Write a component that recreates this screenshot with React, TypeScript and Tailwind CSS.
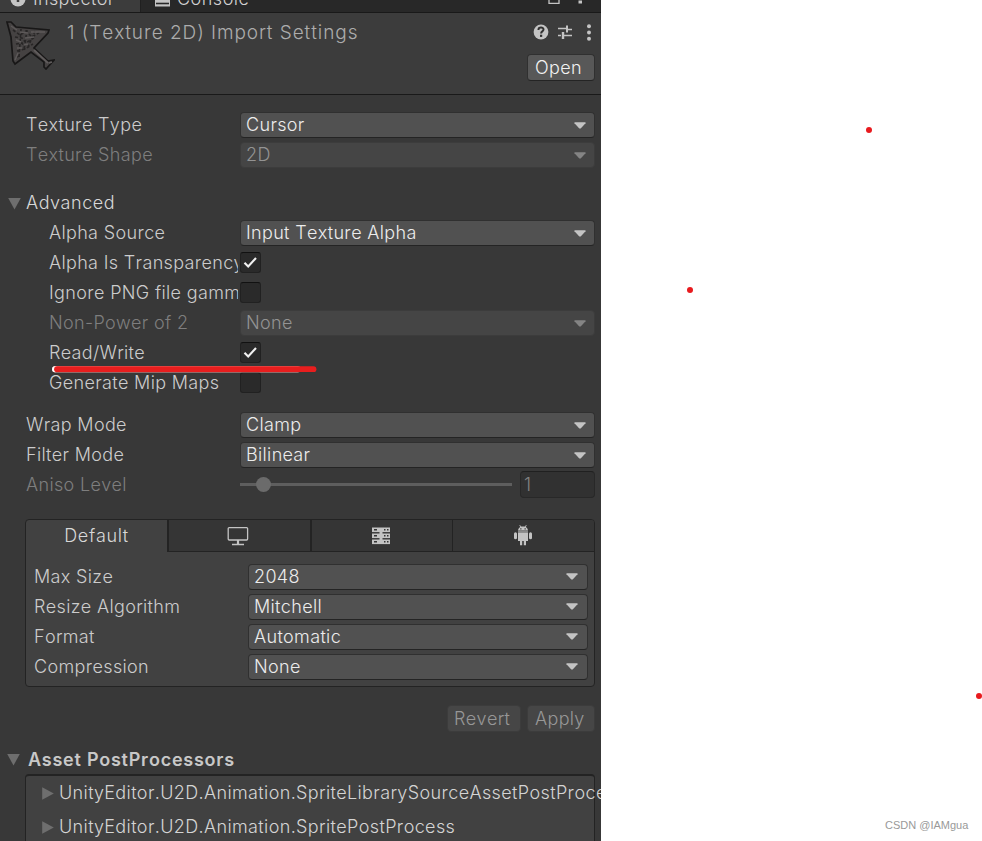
import type { ReactNode } from 'react';
import { clsx } from 'clsx';

interface RowProps {
  label: string;
  disabled?: boolean;
  indent?: boolean;
  children: ReactNode;
}

function Row({ label, disabled, indent, children }: RowProps) {
  return (
    <div className="flex h-[30px] items-center">
      <div className={clsx('w-[238px] shrink-0 overflow-hidden whitespace-nowrap', indent ? 'pl-[49px]' : 'pl-[26px]', disabled ? 'text-[#7e7e7e]' : 'text-[#cccccc]')}>
        {label}
      </div>
      <div className="ml-[2px] flex w-[355px] items-center">{children}</div>
    </div>
  );
}

function Dropdown({ value, disabled }: { value: string; disabled?: boolean }) {
  return (
    <div
      className={clsx(
        'flex h-[26px] w-full items-center justify-between rounded-[4px] border pr-[8px] pl-[5px]',
        disabled ? 'border-[#3c3c3c] bg-[#454545] text-[#939393]' : 'border-[#303030] border-b-[#242424] bg-[#515151] text-[#ececec]'
      )}
    >
      <span>{value}</span>
      <svg width="12" height="7" viewBox="0 0 12 7" className={disabled ? 'text-[#848484]' : 'text-[#c4c4c4]'}>
        <path d="M0.5 0.3h11v1L6.7 6.5H5.3L0.5 1.3z" fill="currentColor" />
      </svg>
    </div>
  );
}

function Checkbox({ checked }: { checked?: boolean }) {
  return (
    <div className="mb-[1px] flex h-[21px] w-[21px] items-center justify-center rounded-[3px] border border-[#212121] border-t-[#111111] bg-[#2a2a2a]">
      {checked && (
        <svg width="15" height="13" viewBox="0 0 15 13" fill="none">
          <path d="M1.5 6.7l3.7 3.8L13 2" stroke="#f0f0f0" strokeWidth="2.1" />
        </svg>
      )}
    </div>
  );
}

function PanelRow({ label, value }: { label: string; value: string }) {
  return (
    <div className="flex h-[30px] items-center">
      <div className="w-[214px] text-[#cccccc]">{label}</div>
      <div className="w-[340px] [&_svg]:mr-[1px] [&_svg]:mb-[2px]">
        <Dropdown value={value} />
      </div>
    </div>
  );
}

function Foldout({ open }: { open?: boolean }) {
  return (
    <svg width="13" height="13" viewBox="0 0 13 13" fill="#6e6e6e" className="shrink-0">
      {open ? <path d="M0.2 1h12.6L6.5 12.5z" /> : <path d="M0.2 0.2v12.6L11.8 6.5z" />}
    </svg>
  );
}

function CursorThumb() {
  return (
    <svg width="50" height="50" viewBox="0 0 50 50" className="-ml-[1px] shrink-0">
      <path d="M2 2h4l5 5 33 3-1 3-14 15 14 13 6-1-8 9-2-2v-5L26 32 10 44l-2-3-2-24z" fill="#454242" stroke="#181717" strokeWidth="1.7" />
      <path d="M8 10l7 5 6-4 6 6 8-5M10 17l7 1 4 5 9-6M11 24l6-1 3 6 8-5M12 31l8-2M12 37l4-2M16 9l-2 28M22 10l-3 20M30 11l-7 16" fill="none" stroke="#282626" strokeWidth="1.6" strokeDasharray="3 2" />
      <path d="M6 6l6 4M15 12l8 1M26 12l14 0M11 20l5 2M20 18l9-1M12 28l5 0M10 40l3-7M19 25l4-1" stroke="#5d5959" strokeWidth="1.5" />
      <path d="M29 30l14 13M44 43l3-1" stroke="#605c5c" strokeWidth="1.8" />
    </svg>
  );
}

function HelpIcon() {
  return (
    <svg width="16" height="16" viewBox="0 0 16 16">
      <circle cx="8" cy="8" r="7.4" fill="#c4c4c4" />
      <path d="M5.5 6V5.4C5.5 2.7 10.6 2.8 10.5 5.6 10.5 7.5 8.1 7.3 8.1 9.4" fill="none" stroke="#303030" strokeWidth="2" />
      <rect x="7" y="10.7" width="2.2" height="2.2" fill="#303030" />
    </svg>
  );
}

function PresetIcon() {
  return (
    <svg width="16" height="16" viewBox="0 0 16 16" fill="none" stroke="#c4c4c4">
      <path d="M1 4.5h9M10 5.5h5M1 11.5h3M7 11.5h8" strokeWidth="1.3" />
      <path d="M10 1.5v7" strokeWidth="2" />
      <path d="M6 8v7" strokeWidth="2.4" />
    </svg>
  );
}

function MonitorIcon() {
  return (
    <svg width="22" height="20" viewBox="0 0 22 20" fill="none" stroke="#c4c4c4" strokeWidth="1.3">
      <rect x="1.2" y="1.6" width="19.4" height="12.4" rx="1" />
      <path d="M5 18.5h12" />
      <path d="M11 14v4" strokeWidth="2.2" />
    </svg>
  );
}

function ServerIcon() {
  return (
    <svg width="18" height="18" viewBox="0 0 18 18" fill="#c4c4c4">
      {[0.5, 6.5, 12.5].map((y) => (
        <g key={y}>
          <rect x="0" y={y} width="18" height="4.6" />
          <path d={`M2 ${y + 2.2}h3M12 ${y + 2.2}h1.5M15 ${y + 2.2}h1.5`} stroke="#353535" strokeWidth="1.6" />
        </g>
      ))}
      <rect x="7.5" y="4" width="3" height="10" />
    </svg>
  );
}

function AndroidIcon() {
  return (
    <svg width="18" height="21" viewBox="0 0 18 21" fill="#c4c4c4">
      <path d="M4 5.5C4.2 3.5 5.4 2.3 6.3 1.9L5.3.3 6 0l1 1.5h4L12 0l.7.3-1 1.6C12.7 2.3 13.8 3.5 14 5.5z" />
      <rect x="4" y="5.5" width="10" height="2" fill="#8a8a8a" />
      <path d="M4 7.5h10V16h-2v4.2H9.8V16H8.2v4.2H6V16H4zM0 8.7Q0 7.2 1.5 7.2T3 8.7V13q0 1.3-1.5 1.3T0 13zM15 8.7q0-1.5 1.5-1.5T18 8.7V13q0 1.3-1.5 1.3T15 13z" />
      <path d="M6.2 3.2h1.3v1.2H6.2zM10.5 3.2h1.3v1.2h-1.3z" fill="#404040" />
    </svg>
  );
}

function Tab({ children, className }: { children: ReactNode; className?: string }) {
  return <div className={clsx('flex h-[32px] items-center justify-center border-b border-[#232323] bg-[#353535]', className)}>{children}</div>;
}

const processors = ['UnityEditor.U2D.Animation.SpriteLibrarySourceAssetPostProcess', 'UnityEditor.U2D.Animation.SpritePostProcess'];

const dots = ['left-[866px] top-[127px]', 'left-[687px] top-[287px]', 'left-[976px] top-[693px]'];

function TabBar() {
  return (
    <div className="flex h-[13px] items-end overflow-hidden border-b border-[#191919] bg-[#282828] text-[#d2d2d2]">
      <div className="flex h-[22px] w-[141px] shrink-0 items-center border-r border-[#202020] bg-[#3c3c3c] pl-[10px]">
        <svg width="16" height="16" viewBox="0 0 16 16" className="-mt-[4px]">
          <circle cx="8" cy="8" r="7.5" fill="#c4c4c4" />
          <path d="M8 3v8" stroke="#3c3c3c" strokeWidth="2.5" />
        </svg>
        <span className="-mt-[5px] ml-[7px]">Inspector</span>
      </div>
      <div className="flex h-[22px] grow items-center pl-[14px]">
        <svg width="15" height="16" viewBox="0 0 15 16" className="-mt-[4px]">
          <path d="M0 0h15v15.5H0z" fill="#c4c4c4" />
          <path d="M1 12.5h13" stroke="#282828" strokeWidth="1.6" />
        </svg>
        <span className="-mt-[5px] ml-[7px] tracking-[0.5px]">Console</span>
      </div>
      <svg width="53" height="13" viewBox="0 0 53 13" className="shrink-0">
        <path d="M1 -4v8.4h10V-4" fill="none" stroke="#c4c4c4" strokeWidth="1.3" />
        <rect x="30.5" y="1.5" width="3.5" height="3" fill="#c4c4c4" />
      </svg>
    </div>
  );
}

export default function App() {
  return (
    <div className="relative h-[841px] w-[982px] overflow-hidden bg-white font-['Inter',sans-serif] text-[18px] leading-[24px] font-[350] tracking-[0.34px] [font-kerning:none]">
      <div className="h-full w-[601px] overflow-hidden bg-[#383838]">
        <TabBar />

        <div className="flex h-[82px] justify-between border-b border-[#191919] bg-[#3c3c3c] pr-[6px] pl-[6px]">
          <div className="flex pt-[7px]">
            <CursorThumb />
            <div className="mt-[1px] ml-[12px] text-[19px] tracking-[0.94px] text-[#acacac]">1 (Texture 2D) Import Settings</div>
          </div>
          <div className="flex flex-col items-end pt-[11px]">
            <div className="flex h-[16px] items-center gap-[8px]">
              <HelpIcon />
              <PresetIcon />
              <svg width="14" height="17" viewBox="0 0 14 17" fill="#c4c4c4">
                <circle cx="8" cy="2.3" r="2" />
                <circle cx="8" cy="8.5" r="2" />
                <circle cx="8" cy="14.7" r="2" />
              </svg>
            </div>
            <button className="mt-[14px] h-[27px] w-[68px] rounded-[4px] border border-[#303030] border-b-[#242424] bg-[#585858] pr-[5px] leading-[24px] text-[#f2f2f2]">Open</button>
          </div>
        </div>

        <div className="pt-[15px]">
          <Row label="Texture Type">
            <Dropdown value="Cursor" />
          </Row>
          <Row label="Texture Shape" disabled>
            <Dropdown value="2D" disabled />
          </Row>
        </div>

        <div className="pt-[18px]">
          <div className="flex h-[30px] items-center pl-[8px] text-[#d8d8d8]">
            <Foldout open />
            <span className="ml-[5px] tracking-[0.55px]">Advanced</span>
          </div>
          <Row label="Alpha Source" indent>
            <Dropdown value="Input Texture Alpha" />
          </Row>
          <Row label="Alpha Is Transparency" indent>
            <Checkbox checked />
          </Row>
          <Row label="Ignore PNG file gamma" indent>
            <Checkbox />
          </Row>
          <Row label="Non-Power of 2" indent disabled>
            <Dropdown value="None" disabled />
          </Row>
          <Row label="Read/Write" indent>
            <Checkbox checked />
          </Row>
          <Row label="Generate Mip Maps" indent>
            <Checkbox />
          </Row>
        </div>

        <div className="pt-[12px]">
          <Row label="Wrap Mode">
            <Dropdown value="Clamp" />
          </Row>
          <Row label="Filter Mode">
            <Dropdown value="Bilinear" />
          </Row>
          <Row label="Aniso Level" disabled>
            <div className="mb-[1px] flex h-[15px] w-[272px] items-center bg-[linear-gradient(#5e5e5e,#5e5e5e)] bg-[length:100%_3px] bg-center bg-no-repeat pl-[16px]">
              <div className="h-[15px] w-[15px] rounded-full bg-[#6b6b6b]" />
            </div>
            <div className="mb-[1px] ml-[8px] flex h-[27px] w-[75px] items-center rounded-[4px] border border-[#282828] border-t-[#202020] bg-[#313131] pl-[3px] text-[#838383]">1</div>
          </Row>
        </div>

        <div className="mt-[19px] ml-[25px] h-[168px] w-[570px] overflow-hidden rounded-[4px] border border-[#232323] bg-[#414141]">
          <div className="flex">
            <div className="flex h-[32px] w-[141px] items-center justify-center tracking-[0.7px] text-[#d8d8d8]">Default</div>
            <Tab className="w-[143px] border-l-2 pr-[3px]">
              <MonitorIcon />
            </Tab>
            <Tab className="w-[142px] border-l-2 pr-[2px]">
              <ServerIcon />
            </Tab>
            <Tab className="w-[142px] border-l pr-[2px]">
              <AndroidIcon />
            </Tab>
          </div>
          <div className="pt-[10px] pl-[8px]">
            <PanelRow label="Max Size" value="2048" />
            <PanelRow label="Resize Algorithm" value="Mitchell" />
            <PanelRow label="Format" value="Automatic" />
            <PanelRow label="Compression" value="None" />
          </div>
        </div>

        <div className="mt-[18px] flex justify-end gap-[6px] pr-[6px] text-[#979797]">
          <div className="flex h-[27px] w-[74px] items-center rounded-[4px] border border-[#3c3c3c] bg-[#464646] pl-[6px]">Revert</div>
          <div className="flex h-[27px] w-[68px] items-center rounded-[4px] border border-[#3c3c3c] bg-[#464646] pl-[7px]">Apply</div>
        </div>

        <div className="mt-[13px] flex h-[29px] items-center pl-[7px] font-semibold tracking-[0.75px] text-[#c8c8c8]">
          <Foldout open />
          <span className="ml-[8px]">Asset PostProcessors</span>
        </div>
        <div className="ml-[25px] h-[90px] w-[570px] rounded-[4px] border border-t-2 border-[#232323] bg-[#414141] tracking-[0.37px] text-[#d4d4d4]">
          {processors.map((name) => (
            <div key={name} className="flex h-[34px] items-center pl-[16px] whitespace-nowrap">
              <Foldout />
              <span className="ml-[4px]">{name}</span>
            </div>
          ))}
        </div>
      </div>

      {/* red marker line and stray dots */}
      <svg width="268" height="8" viewBox="0 0 268 8" className="absolute top-[365px] left-[51px]">
        <path d="M4.5 4.3h242" stroke="#e9a09b" strokeWidth="6.6" strokeLinecap="round" />
        <circle cx="4" cy="4.2" r="3" fill="#ffffff" />
        <path d="M6 4.2h256.5" stroke="#e81e1e" strokeWidth="5.8" strokeLinecap="round" />
      </svg>
      {dots.map((pos) => (
        <div key={pos} className={clsx('absolute h-[6px] w-[6px] rounded-full bg-[#e81a1e]', pos)} />
      ))}
      <div className="absolute top-[817px] left-[885px] font-['Liberation_Sans','Noto_Sans_CJK_SC',sans-serif] text-[11px] leading-[16px] tracking-[0px] text-[#999999]">CSDN @IAMgua</div>
    </div>
  );
}
